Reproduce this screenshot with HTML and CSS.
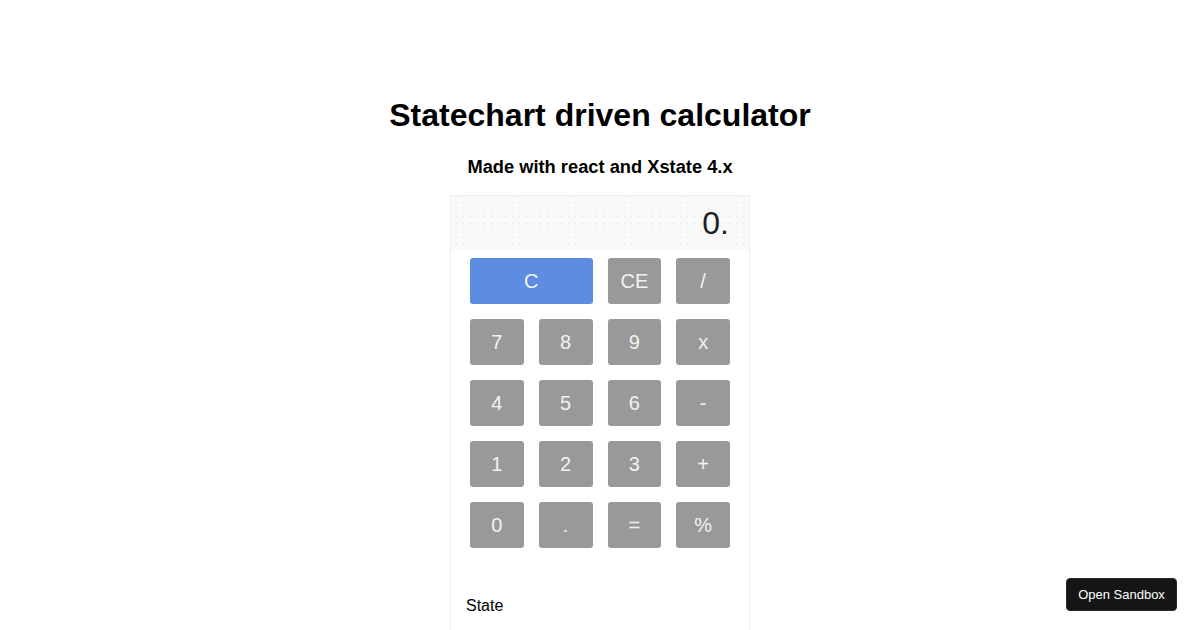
FILE: index.html
```html
<!DOCTYPE html>
<html>
<head>
<meta charset="utf-8">
<title>Statechart driven calculator</title>
<link rel="stylesheet" href="styles.css">
</head>
<body>
<div class="page">
  <h1 class="title">Statechart driven calculator</h1>
  <h3 class="subtitle">Made with react and Xstate 4.x</h3>
  <div class="calc">
    <div class="display">0.</div>
    <div class="keypad">
      <button class="key key-clear wide">C</button>
      <button class="key">CE</button>
      <button class="key">/</button>
      <button class="key">7</button>
      <button class="key">8</button>
      <button class="key">9</button>
      <button class="key">x</button>
      <button class="key">4</button>
      <button class="key">5</button>
      <button class="key">6</button>
      <button class="key">-</button>
      <button class="key">1</button>
      <button class="key">2</button>
      <button class="key">3</button>
      <button class="key">+</button>
      <button class="key">0</button>
      <button class="key">.</button>
      <button class="key">=</button>
      <button class="key">%</button>
    </div>
    <div class="state">
      <div class="state-label">State</div>
      <pre class="state-value">"start"</pre>
    </div>
  </div>
</div>
<a class="sandbox" href="#">Open Sandbox</a>
</body>
</html>
```

FILE: styles.css
```css
html, body {
  margin: 0;
  padding: 0;
  background: #ffffff;
  font-family: "Liberation Sans", Arial, sans-serif;
  color: #000;
  overflow: hidden;
  height: 630px;
}

.page {
  padding-top: 97px;
  text-align: center;
}

.title {
  font-size: 32px;
  font-weight: bold;
  margin: 0 0 22px;
  line-height: 37px;
}

.subtitle {
  font-size: 18.3px;
  font-weight: bold;
  margin: 0 0 18px;
  line-height: 21px;
}

.calc {
  box-sizing: border-box;
  width: 300px;
  margin: 0 auto;
  border: 1px solid #eeeeee;
  text-align: left;
}

.display {
  height: 54px;
  box-sizing: border-box;
  padding: 9px 20px 0 20px;
  text-align: right;
  font-size: 32px;
  line-height: 37px;
  color: #222;
  background-color: #f8fafa;
  background-image: radial-gradient(circle, #e9eded 0.8px, transparent 1.2px);
  background-size: 7px 7px;
  background-position: 2px 3px;
}

.keypad {
  display: grid;
  grid-template-columns: repeat(4, 1fr);
  column-gap: 15px;
  row-gap: 15px;
  padding: 8px 19px 0 19px;
}

.key {
  height: 46px;
  border: none;
  border-radius: 3px;
  background: #999999;
  color: #f2f2f2;
  font-family: "Liberation Sans", Arial, sans-serif;
  font-size: 20px;
  padding: 0;
  margin: 0;
}

.key.wide {
  grid-column: span 2;
}

.key-clear {
  background: #5d8de0;
}

.state {
  margin-top: 49px;
  padding-left: 15px;
}

.state-label {
  font-size: 16px;
  line-height: 18px;
}

.state-value {
  margin: 12px 0 0;
  font-family: "Liberation Sans", Arial, sans-serif;
  font-size: 14px;
}

.sandbox {
  position: fixed;
  right: 23px;
  bottom: 19px;
  width: 111px;
  height: 33px;
  box-sizing: border-box;
  display: flex;
  align-items: center;
  justify-content: center;
  background: #151515;
  color: #ffffff;
  font-size: 13px;
  text-decoration: none;
  border-radius: 4px;
  border: 1px solid #2a2a2a;
}
```
